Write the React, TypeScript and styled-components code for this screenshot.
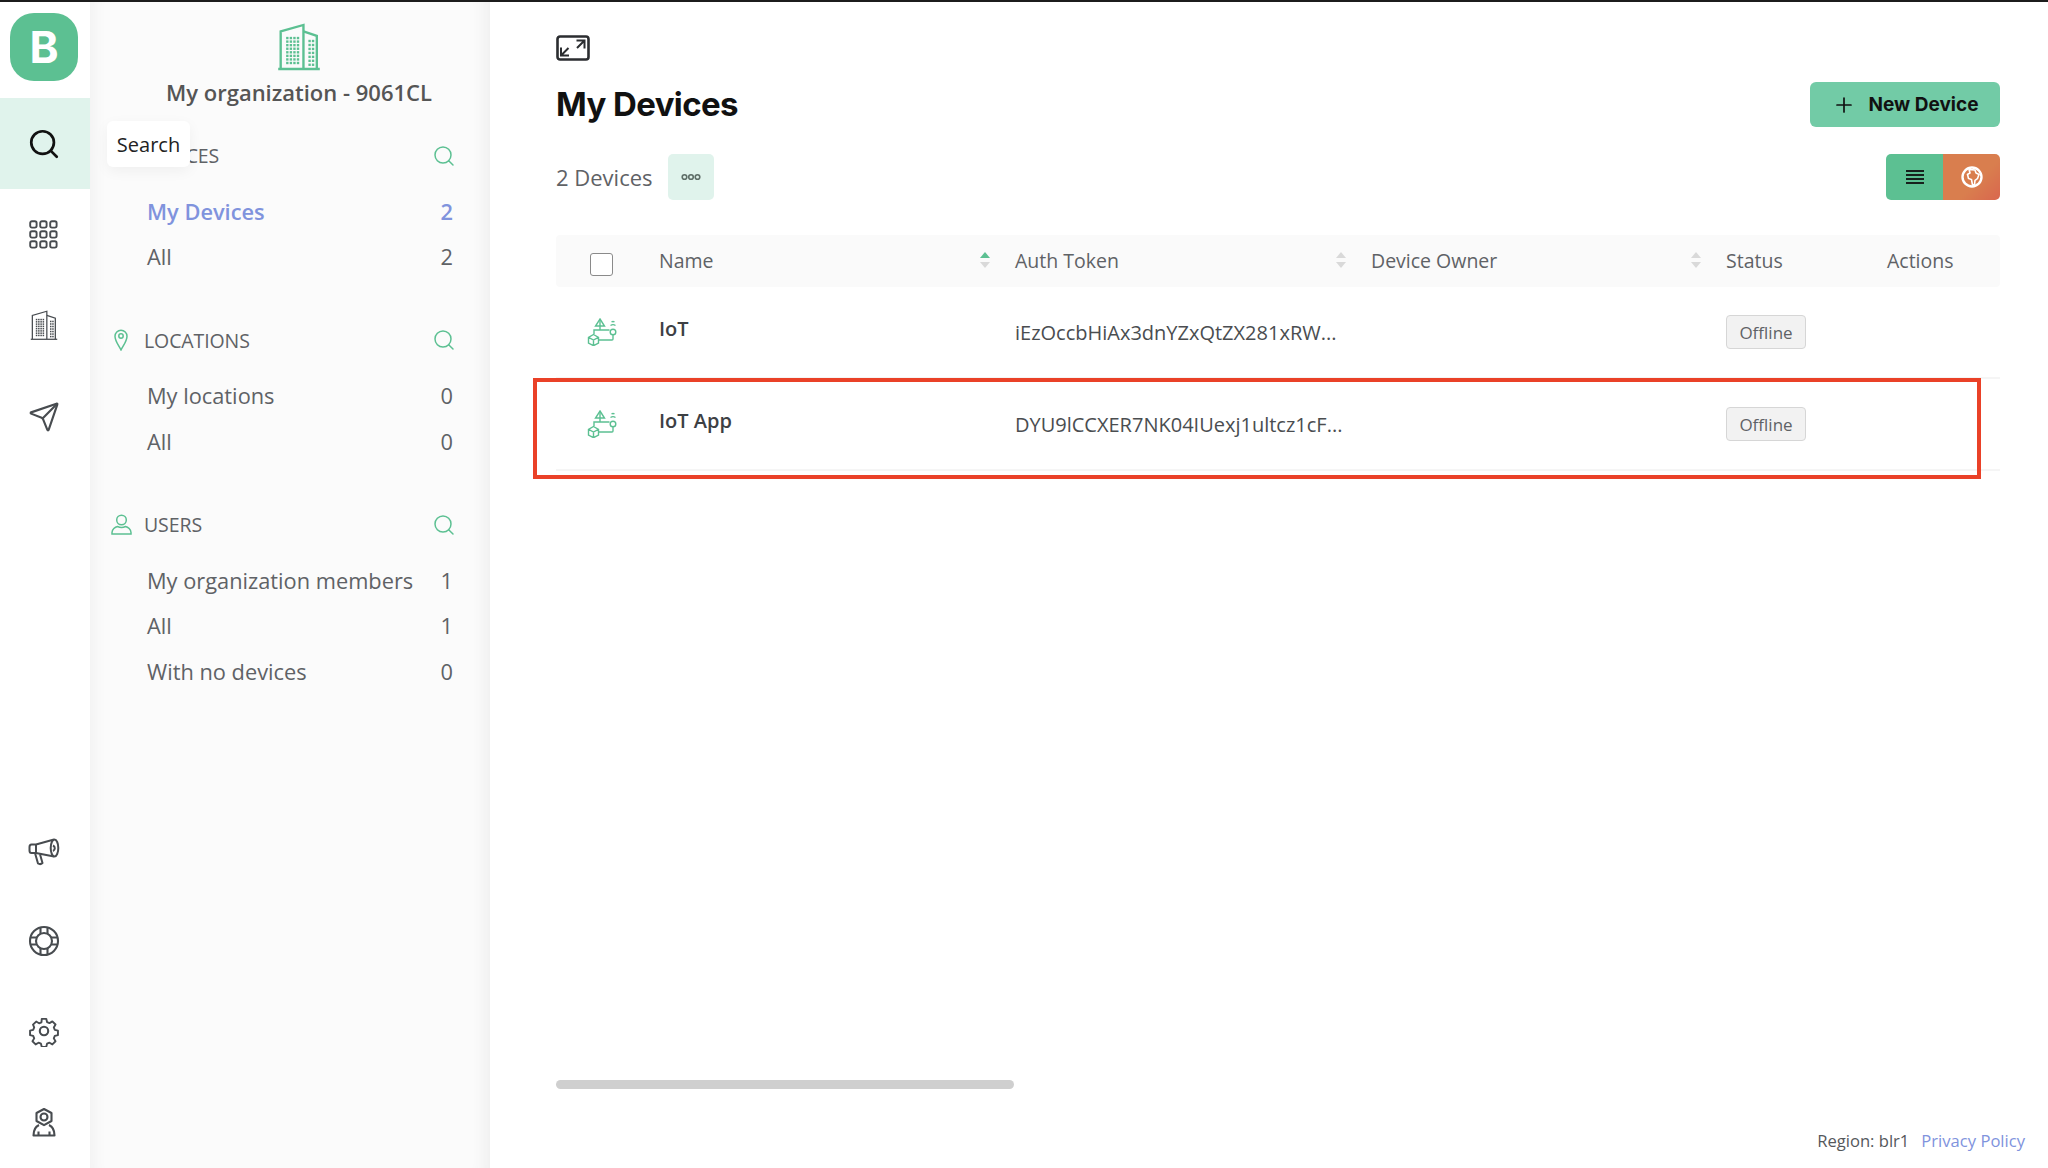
import React from "react";
import styled, { createGlobalStyle } from "styled-components";
import { Search, Send, Plus } from "lucide-react";

const GlobalStyle = createGlobalStyle`
  html, body {
    margin: 0;
    padding: 0;
    height: 100%;
    background: #fff;
  }
  * { box-sizing: border-box; }
  body {
    font-family: "Open Sans", "Noto Sans", sans-serif;
    color: #555;
  }
`;

const Page = styled.div`
  height: 100vh;
  display: flex;
  flex-direction: column;
  overflow: hidden;
  border-top: 2px solid #1c1c1c;
`;

const Body = styled.div`
  flex: 1;
  display: flex;
  min-height: 0;
`;

/* left icon rail */
const Rail = styled.nav`
  width: 90px;
  flex-shrink: 0;
  display: flex;
  flex-direction: column;
  justify-content: space-between;
  background: #fff;
`;

const RailGroup = styled.div`
  display: flex;
  flex-direction: column;
`;

const Logo = styled.div`
  width: 68px;
  height: 68px;
  margin: 11px 0 17px 10px;
  border-radius: 24px;
  background: #5cc092;
  color: #fff;
  font-family: Inter, "Liberation Sans", sans-serif;
  font-weight: 700;
  font-size: 44px;
  display: flex;
  align-items: center;
  justify-content: center;
`;

const RailItem = styled.div<{ $active?: boolean }>`
  position: relative;
  height: 91px;
  padding-right: 2px;
  display: flex;
  align-items: center;
  justify-content: center;
  color: #484c50;
  background: ${(p) => (p.$active ? "#e0f3ec" : "transparent")};
`;

const Tooltip = styled.div`
  position: absolute;
  left: 107px;
  top: 23px;
  width: 83px;
  height: 46px;
  z-index: 5;
  border-radius: 6px;
  background: #fff;
  box-shadow: 0 4px 14px rgba(0, 0, 0, 0.05);
  color: #222;
  font-size: 20px;
  display: flex;
  align-items: center;
  justify-content: center;
`;

/* second column with the org and the filters */
const Sidebar = styled.aside`
  width: 400px;
  flex-shrink: 0;
  background: #fbfbfb;
  box-shadow: inset 16px 0 14px -12px #f1f1f1, inset -18px 0 14px -12px #efefef;
  padding: 21px 37px 0 17px;
`;

const OrgHead = styled.div`
  display: flex;
  flex-direction: column;
  align-items: center;
  gap: 6px;
  margin-left: 38px;
  margin-bottom: 34px;
`;

const OrgName = styled.div`
  font-size: 22px;
  font-weight: 600;
  line-height: 30px;
  color: #555;
  white-space: nowrap;
`;

const Section = styled.section`
  margin-bottom: 45.5px;
`;

const SectionHead = styled.div`
  display: flex;
  align-items: center;
  height: 30px;
  margin-bottom: 18px;
  color: #5cc092;
`;

const SectionIcon = styled.div`
  width: 37px;
  flex-shrink: 0;
  display: flex;
  justify-content: center;
  padding-right: 9px;
`;

const SectionTitle = styled.div`
  flex: 1;
  font-size: 19.5px;
  color: #5f6266;
  letter-spacing: -0.1px;
`;

const SectionSearch = styled(Search)`
  margin-right: -3px;
`;

const FilterRow = styled.div<{ $active?: boolean }>`
  display: flex;
  justify-content: space-between;
  align-items: center;
  height: 45.5px;
  padding-left: 40px;
  font-size: 21.8px;
  font-weight: ${(p) => (p.$active ? 600 : 400)};
  color: ${(p) => (p.$active ? "#8093dd" : "#5f6266")};
`;

/* main area */
const Main = styled.main`
  flex: 1;
  min-width: 0;
  display: flex;
  flex-direction: column;
  padding: 33px 48px 0 66px;
`;

const ExpandButton = styled.div`
  height: 26px;
  margin-bottom: 21px;
  display: flex;
`;

const TitleRow = styled.div`
  display: flex;
  justify-content: space-between;
  align-items: center;
  height: 45px;
  margin-bottom: 27px;
`;

const Title = styled.h1`
  margin: -2px 0 0;
  font-family: Inter, "Liberation Sans", sans-serif;
  font-size: 33px;
  font-weight: 700;
  letter-spacing: -0.6px;
  color: #111;
`;

const NewButton = styled.button`
  width: 190px;
  height: 45px;
  border: 0;
  border-radius: 6px;
  background: #72cba6;
  color: #111;
  font-family: Inter, "Liberation Sans", sans-serif;
  font-size: 19px;
  font-weight: 700;
  display: flex;
  align-items: center;
  justify-content: center;
  gap: 13px;
`;

const CountRow = styled.div`
  display: flex;
  align-items: center;
  height: 46px;
  margin-bottom: 35px;
`;

const CountText = styled.div`
  font-size: 22px;
  color: #5f6266;
  margin-right: 15px;
`;

const MoreButton = styled.div`
  width: 46px;
  height: 46px;
  border-radius: 5px;
  background: #e0f3ec;
  display: flex;
  align-items: center;
  justify-content: center;
`;

const ViewToggle = styled.div`
  margin-left: auto;
  display: flex;
  border-radius: 5px;
  overflow: hidden;
`;

const ToggleButton = styled.div<{ $map?: boolean }>`
  width: 57px;
  height: 46px;
  display: flex;
  align-items: center;
  justify-content: center;
  background: ${(p) =>
    p.$map ? "linear-gradient(135deg, #d97e4e 60%, #d9664e 100%)" : "#5cc092"};
`;

const Table = styled.div`
  position: relative;
`;

const columns = "103px 356px 356px 355px 161px 113px";

const HeaderRow = styled.div`
  display: grid;
  grid-template-columns: ${columns};
  align-items: center;
  height: 52px;
  padding-bottom: 2px;
  border-radius: 4px;
  background: #fafafa;
  font-size: 19.5px;
  color: #5f6266;
`;

const HeaderCell = styled.div`
  display: flex;
  justify-content: space-between;
  align-items: center;
  padding-right: 24px;
`;

const CheckCell = styled.div`
  padding-left: 34px;
  padding-top: 9px;
`;

const Checkbox = styled.div`
  width: 23px;
  height: 23px;
  border: 1.5px solid #8a8a8a;
  border-radius: 3px;
  background: #fff;
`;

const DeviceRow = styled.div`
  display: grid;
  grid-template-columns: ${columns};
  align-items: center;
  height: 92px;
  border-bottom: 2px solid #f5f5f5;
`;

const DeviceIconCell = styled.div`
  padding-left: 31px;
  display: flex;
`;

const DeviceName = styled.div`
  font-size: 20px;
  font-weight: 600;
  color: #3d4044;
  margin-top: -8px;
`;

const Token = styled.div`
  font-size: 20px;
  color: #4a4d50;
  white-space: nowrap;
`;

const StatusBadge = styled.div`
  width: 80px;
  height: 34px;
  border: 1.5px solid #d6d6d6;
  border-radius: 4px;
  background: #f2f2f2;
  font-size: 17px;
  font-weight: 500;
  color: #5f6266;
  display: flex;
  align-items: center;
  justify-content: center;
`;

const Annotation = styled.div`
  position: absolute;
  left: -23px;
  top: 143px;
  width: 1448px;
  height: 101px;
  border: 4px solid #ea4128;
  pointer-events: none;
`;

const ScrollBar = styled.div`
  margin-top: auto;
  width: 458px;
  height: 9px;
  flex-shrink: 0;
  border-radius: 5px;
  background: #cfcfcf;
`;

const Footer = styled.footer`
  display: flex;
  justify-content: flex-end;
  gap: 12px;
  height: 79px;
  padding-top: 40px;
  margin-right: -25px;
  font-size: 16.6px;
  color: #55585c;
`;

const FooterLink = styled.span`
  color: #8093dd;
`;

/* drawings */
const GridIcon = () => (
  <svg width="30" height="30" viewBox="0 0 30 30" fill="none" stroke="currentColor" strokeWidth="1.9">
    {[0, 10, 20].flatMap((y) =>
      [0, 10, 20].map((x) => <rect key={`${x}-${y}`} x={x + 1.2} y={y + 1.2} width="6.4" height="6.4" rx="1.8" />)
    )}
  </svg>
);

const windows = (cols: number[], rows: number[], size: number) =>
  cols.flatMap((x) => rows.map((y) => <rect key={`${x}-${y}`} x={x} y={y} width={size} height={size} />));

const BuildingIcon = ({ color, size, sw }: { color: string; size: number; sw: number }) => (
  <svg width={size} height={size * 1.08} viewBox="0 0 44 48" fill="none" stroke={color} strokeWidth={sw}>
    <path d="M1 46.5h42" />
    <path d="M3.5 46V8.5L26.5 2v44" />
    <path d="M26.5 8.5l13.5 4.5v33" />
    <g fill={color} stroke="none">
      {windows([9, 12.6, 16.2, 19.8], [14, 17.6, 21.2, 24.8, 28.4, 32, 35.6, 39.2], 2.4)}
      {windows([31.5, 35], [17, 21, 25, 29, 33, 37, 41], 2.4)}
    </g>
  </svg>
);

const PinIcon = () => (
  <svg width="14" height="22" viewBox="0 0 14 22" fill="none" stroke="#5cc092" strokeWidth="1.5">
    <path d="M7 21C4.5 16 1 12 1 7.2a6 6 0 0 1 12 0C13 12 9.5 16 7 21z" />
    <circle cx="7" cy="7" r="2.2" />
  </svg>
);

const UserIcon = () => (
  <svg width="21" height="21" viewBox="0 0 21 21" fill="none" stroke="#5cc092" strokeWidth="1.5">
    <circle cx="10.5" cy="6" r="4.8" />
    <path d="M1 20v-1.5c0-3 3-5.5 5.5-6 2.5 1.2 5.5 1.2 8 0 2.5.5 5.5 3 5.5 6V20z" />
  </svg>
);

const MegaphoneIcon = () => (
  <svg width="32" height="32" viewBox="0 -4 32 32" fill="none" stroke="#484c50" strokeWidth="2" strokeLinejoin="round">
    <ellipse cx="26.5" cy="10" rx="3.8" ry="8.5" />
    <path d="M26 1.5L8 6.5H3.5Q1.5 6.5 1.5 9v3.5Q1.5 15 3.5 15H8l18 3.5" />
    <path d="M8 6.5v8.5" />
    <path d="M7 15l3 10.5q2.5 1.5 4.5-.5L12 16.2" />
    <path d="M25 7.5a3 3 0 0 1 0 5.5" />
  </svg>
);

const LifeRingIcon = () => (
  <svg width="32" height="32" viewBox="0 0 32 32" fill="none" stroke="#484c50" strokeWidth="2.1">
    <circle cx="16" cy="16" r="14" />
    <circle cx="16" cy="16" r="8" />
    <path d="M12.5 2.5v6.5M19.5 2.5v6.5M12.5 23v6.5M19.5 23v6.5M2.5 12.5H9M2.5 19.5H9M23 12.5h6.5M23 19.5h6.5" />
  </svg>
);

const GearIcon = () => (
  <svg width="30" height="30" viewBox="0 0 30 30" fill="none" stroke="#484c50" strokeWidth="2.1" strokeLinejoin="round">
    <path d="M12.5 1.5h5l.9 3.6 2.7 1.1 3.2-1.9 3.5 3.5-1.9 3.2 1.1 2.7 3.5.9v5l-3.5.9-1.1 2.7 1.9 3.2-3.5 3.5-3.2-1.9-2.7 1.1-.9 3.5h-5l-.9-3.5-2.7-1.1-3.2 1.9-3.5-3.5 1.9-3.2-1.1-2.7-3.5-.9v-5l3.5-.9 1.1-2.7L2.8 8l3.5-3.5 3.2 1.9 2.7-1.1z" transform="translate(1.5 0.5) scale(.9)" />
    <circle cx="15" cy="14" r="4.2" />
  </svg>
);

const AccountIcon = () => (
  <svg width="24" height="30" viewBox="0 0 24 30" fill="none" stroke="#484c50" strokeWidth="2.1" strokeLinejoin="round">
    <path d="M12 1l7.5 4v8L12 17.2 4.5 13V5z" />
    <circle cx="12" cy="9" r="3.5" />
    <path d="M7 17q-5.5 2.5-5.5 10.5h21Q22.5 19.5 17 17" />
    <path d="M6.5 27.5v-4M17.5 27.5v-4" />
  </svg>
);

const ExpandIcon = () => (
  <svg width="34" height="26" viewBox="0 0 34 26" fill="none" stroke="#2b2d30">
    <rect x="1.5" y="1.5" width="31" height="23" rx="2.5" strokeWidth="2.6" />
    <path d="M20.5 5.5h8v8M28 6l-7 7M13 20.5H5v-8M5.5 20l7-7" strokeWidth="2" />
  </svg>
);

const MoreDots = () => (
  <svg width="20" height="8" viewBox="0 0 20 8" fill="none" stroke="#5f6e68" strokeWidth="1.6">
    <circle cx="3.5" cy="4" r="2.3" />
    <circle cx="10" cy="4" r="2.3" />
    <circle cx="16.5" cy="4" r="2.3" />
  </svg>
);

const ListIcon = () => (
  <svg width="18" height="16" viewBox="0 0 18 16" stroke="#17201c" strokeWidth="2">
    <path d="M0 2h18M0 6h18M0 10h18M0 14h18" />
  </svg>
);

const GlobeIcon = () => (
  <svg width="22" height="22" viewBox="0 0 22 22">
    <circle cx="11" cy="11" r="9.5" fill="none" stroke="#fff" strokeWidth="2.4" />
    <path d="M8 3.5l6 .5 1 3 3 1.5-1.5 4-2.5 2-.5 4-2 .5-1-5.5-3-1-1-4 2.5-1.5z" fill="none" stroke="#fff" strokeWidth="1.6" />
  </svg>
);

const SortIcon = ({ up }: { up?: boolean }) => (
  <svg width="12" height="18" viewBox="0 0 12 18">
    <path d="M6 1l5 6H1z" fill={up ? "#5cc092" : "#d9d9d9"} />
    <path d="M6 17l5-6H1z" fill="#d9d9d9" />
  </svg>
);

const DeviceIcon = () => (
  <svg width="30" height="28" viewBox="0 0 30 28" fill="none" stroke="#5cc092" strokeWidth="1.4">
    <path d="M13 1l4.5 7h-9z" />
    <path d="M13 1v7M13 8v4M7 16v-4h15.5" />
    <circle cx="26" cy="14" r="2.8" />
    <path d="M23.5 7.5q2.5-1.8 5 0M24.5 4q1.5-1 3 0" />
    <path d="M6.5 16.5l5 2.8v5.7l-5 2.7-5-2.7v-5.7zM1.5 19.3l5 2.7 5-2.7M6.5 22v5.5" />
    <path d="M12 22h13q1 0 1-1v-4" />
  </svg>
);

const devices = [
  { name: "IoT", token: "iEzOccbHiAx3dnYZxQtZX281xRW..." },
  { name: "IoT App", token: "DYU9lCCXER7NK04IUexj1ultcz1cF..." },
];

const sections = [
  {
    title: "DEVICES",
    icon: null,
    rows: [
      { label: "My Devices", count: 2, active: true },
      { label: "All", count: 2 },
    ],
  },
  {
    title: "LOCATIONS",
    icon: <PinIcon />,
    rows: [
      { label: "My locations", count: 0 },
      { label: "All", count: 0 },
    ],
  },
  {
    title: "USERS",
    icon: <UserIcon />,
    rows: [
      { label: "My organization members", count: 1 },
      { label: "All", count: 1 },
      { label: "With no devices", count: 0 },
    ],
  },
];

export default function App() {
  return (
    <>
      <GlobalStyle />
      <Page>
        <Body>
          <Rail>
            <RailGroup>
              <Logo>B</Logo>
              <RailItem $active>
                <Search size={34} strokeWidth={1.9} color="#111" />
                <Tooltip>Search</Tooltip>
              </RailItem>
              <RailItem><GridIcon /></RailItem>
              <RailItem>
                <BuildingIcon color="#484c50" size={28} sw={2} />
              </RailItem>
              <RailItem><Send size={32} strokeWidth={1.6} /></RailItem>
            </RailGroup>
            <RailGroup>
              <RailItem><MegaphoneIcon /></RailItem>
              <RailItem><LifeRingIcon /></RailItem>
              <RailItem><GearIcon /></RailItem>
              <RailItem><AccountIcon /></RailItem>
            </RailGroup>
          </Rail>

          <Sidebar>
            <OrgHead>
              <BuildingIcon color="#5cc092" size={44} sw={2.4} />
              <OrgName>My organization - 9061CL</OrgName>
            </OrgHead>
            {sections.map((s) => (
              <Section key={s.title}>
                <SectionHead>
                  <SectionIcon>{s.icon}</SectionIcon>
                  <SectionTitle>{s.title}</SectionTitle>
                  <SectionSearch size={24} strokeWidth={1.5} />
                </SectionHead>
                {s.rows.map((r) => (
                  <FilterRow key={r.label} $active={r.active}>
                    <span>{r.label}</span>
                    <span>{r.count}</span>
                  </FilterRow>
                ))}
              </Section>
            ))}
          </Sidebar>

          <Main>
            <ExpandButton><ExpandIcon /></ExpandButton>
            <TitleRow>
              <Title>My Devices</Title>
              <NewButton>
                <Plus size={24} strokeWidth={1.7} />
                New Device
              </NewButton>
            </TitleRow>
            <CountRow>
              <CountText>2 Devices</CountText>
              <MoreButton><MoreDots /></MoreButton>
              <ViewToggle>
                <ToggleButton><ListIcon /></ToggleButton>
                <ToggleButton $map><GlobeIcon /></ToggleButton>
              </ViewToggle>
            </CountRow>

            <Table>
              <HeaderRow>
                <CheckCell><Checkbox /></CheckCell>
                <HeaderCell>Name <SortIcon up /></HeaderCell>
                <HeaderCell>Auth Token <SortIcon /></HeaderCell>
                <HeaderCell>Device Owner <SortIcon /></HeaderCell>
                <div>Status</div>
                <div>Actions</div>
              </HeaderRow>
              {devices.map((d) => (
                <DeviceRow key={d.name}>
                  <DeviceIconCell><DeviceIcon /></DeviceIconCell>
                  <DeviceName>{d.name}</DeviceName>
                  <Token>{d.token}</Token>
                  <div />
                  <StatusBadge>Offline</StatusBadge>
                  <div />
                </DeviceRow>
              ))}
              <Annotation />
            </Table>

            <ScrollBar />
            <Footer>
              <span>Region: blr1</span>
              <FooterLink>Privacy Policy</FooterLink>
            </Footer>
          </Main>
        </Body>
      </Page>
    </>
  );
}
